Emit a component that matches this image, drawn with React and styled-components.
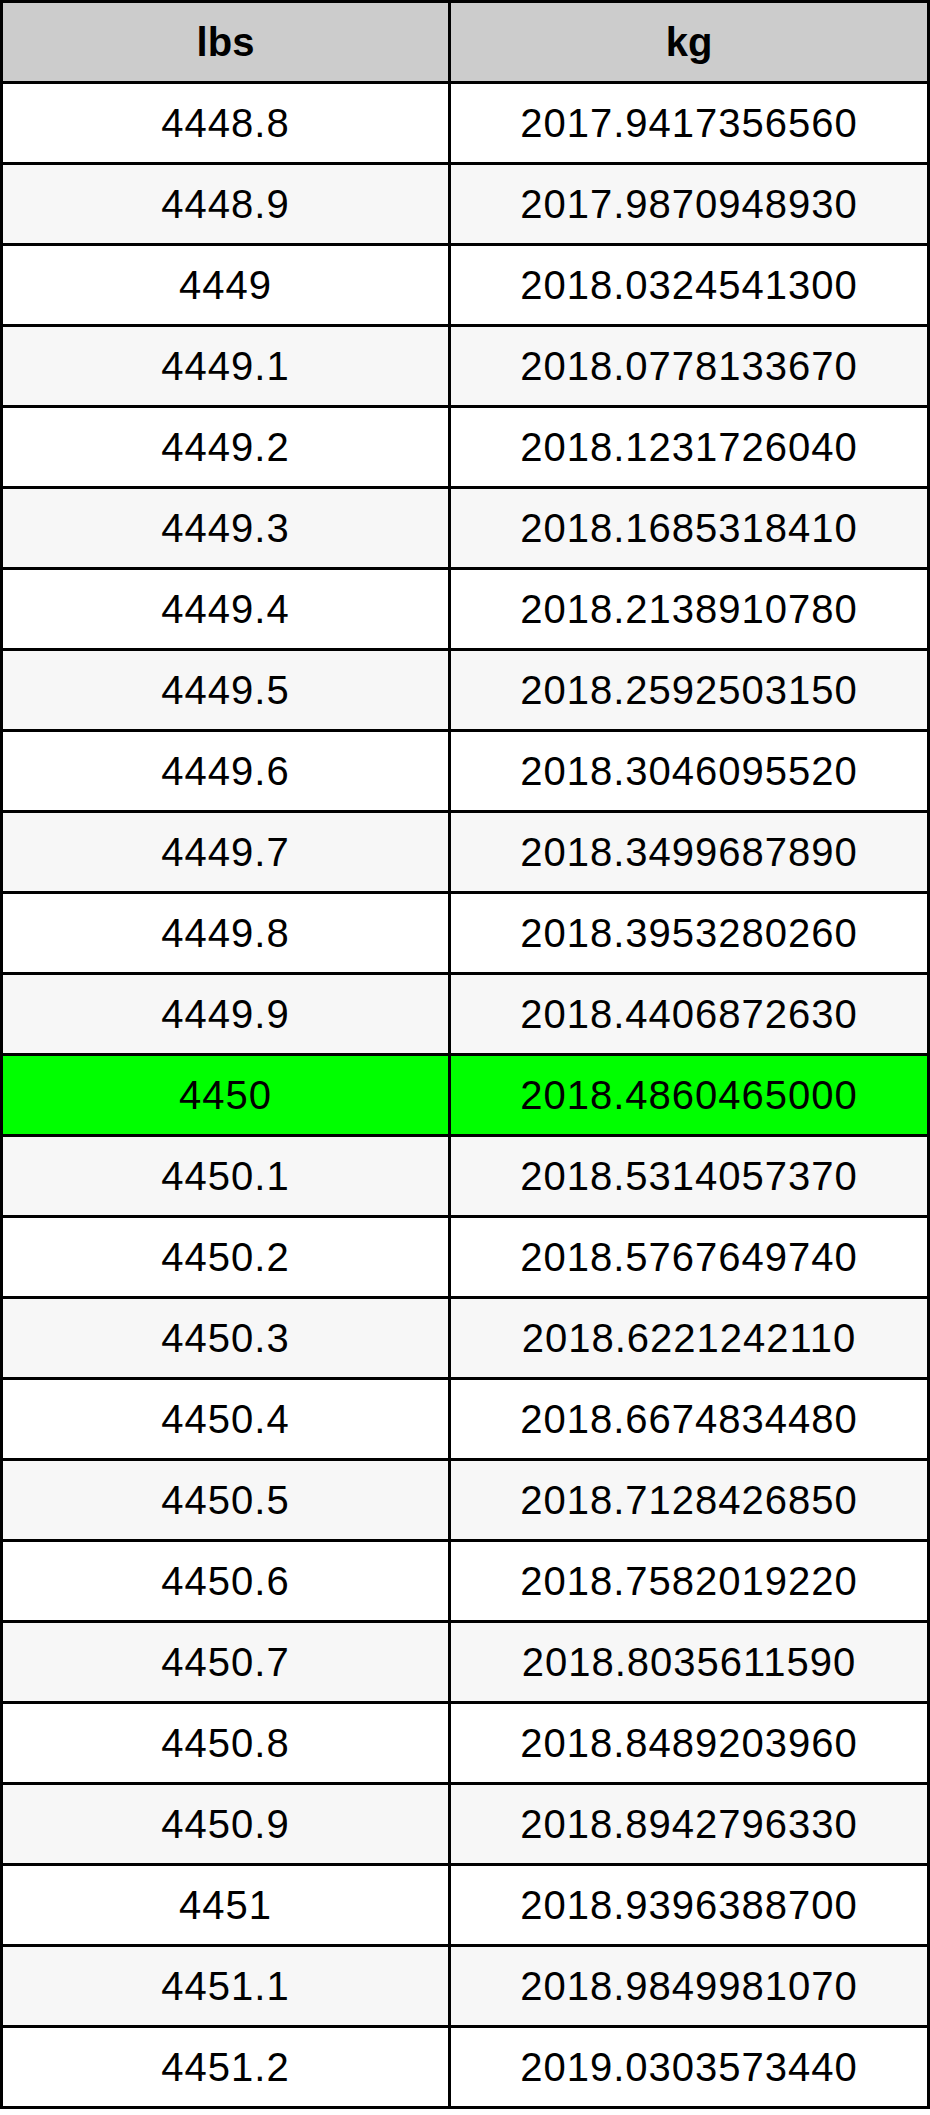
import React from 'react';
import styled, { createGlobalStyle } from 'styled-components';

const GlobalStyle = createGlobalStyle`
    body {
        margin: 0;
        background: #ffffff;
        font-family: 'Liberation Sans', Arial, sans-serif;
    }
`;

const Table = styled.table`
    width: 930px;
    border-collapse: separate;
    border-spacing: 3px;
    background: #000000;
    table-layout: fixed;
`;

const HeadCell = styled.th`
    height: 78px;
    padding: 0;
    background: #cccccc;
    font-size: 40px;
    font-weight: 700;
    color: #000000;
    text-align: center;
    vertical-align: middle;
`;

const Cell = styled.td`
    height: 78px;
    padding: 0;
    background: ${(p) => (p.$active ? '#00ff00' : p.$odd ? '#f7f7f7' : '#ffffff')};
    font-size: 40px;
    letter-spacing: 1px;
    color: #000000;
    text-align: center;
    vertical-align: middle;
`;

const rows = [
    ['4448.8', '2017.9417356560'],
    ['4448.9', '2017.9870948930'],
    ['4449', '2018.0324541300'],
    ['4449.1', '2018.0778133670'],
    ['4449.2', '2018.1231726040'],
    ['4449.3', '2018.1685318410'],
    ['4449.4', '2018.2138910780'],
    ['4449.5', '2018.2592503150'],
    ['4449.6', '2018.3046095520'],
    ['4449.7', '2018.3499687890'],
    ['4449.8', '2018.3953280260'],
    ['4449.9', '2018.4406872630'],
    ['4450', '2018.4860465000'],
    ['4450.1', '2018.5314057370'],
    ['4450.2', '2018.5767649740'],
    ['4450.3', '2018.6221242110'],
    ['4450.4', '2018.6674834480'],
    ['4450.5', '2018.7128426850'],
    ['4450.6', '2018.7582019220'],
    ['4450.7', '2018.8035611590'],
    ['4450.8', '2018.8489203960'],
    ['4450.9', '2018.8942796330'],
    ['4451', '2018.9396388700'],
    ['4451.1', '2018.9849981070'],
    ['4451.2', '2019.0303573440'],
];

function App() {
    return (
        <>
            <GlobalStyle />
            <Table>
                <colgroup>
                    <col style={{ width: '445px' }} />
                    <col />
                </colgroup>
                <thead>
                    <tr>
                        <HeadCell>lbs</HeadCell>
                        <HeadCell>kg</HeadCell>
                    </tr>
                </thead>
                <tbody>
                    {rows.map(([lbs, kg], i) => (
                        <tr key={lbs}>
                            <Cell $odd={i % 2 === 1} $active={lbs === '4450'}>
                                {lbs}
                            </Cell>
                            <Cell $odd={i % 2 === 1} $active={lbs === '4450'}>
                                {kg}
                            </Cell>
                        </tr>
                    ))}
                </tbody>
            </Table>
        </>
    );
}

export default App;
